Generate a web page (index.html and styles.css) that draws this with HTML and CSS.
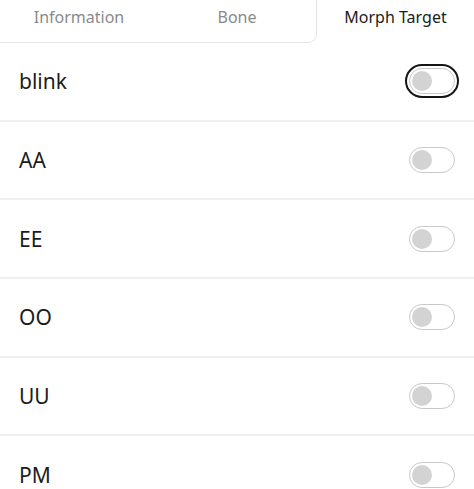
FILE: index.html
```html
<!DOCTYPE html>
<html lang="en">
<head>
    <meta charset="UTF-8">
    <title>Morph Target</title>
    <link rel="stylesheet" href="styles.css">
</head>
<body>
<div class="tabs">
    <div class="tabs-inactive">
        <div class="tab">Information</div>
        <div class="tab">Bone</div>
    </div>
    <div class="tab active">Morph Target</div>
</div>

<div class="list">
    <div class="row"><span class="label">blink</span><span class="toggle focused"><span class="knob"></span></span></div>
    <div class="row"><span class="label">AA</span><span class="toggle"><span class="knob"></span></span></div>
    <div class="row"><span class="label">EE</span><span class="toggle"><span class="knob"></span></span></div>
    <div class="row"><span class="label">OO</span><span class="toggle"><span class="knob"></span></span></div>
    <div class="row"><span class="label">UU</span><span class="toggle"><span class="knob"></span></span></div>
    <div class="row"><span class="label">PM</span><span class="toggle"><span class="knob"></span></span></div>
</div>
</body>
</html>
```

FILE: styles.css
```css
body { margin: 0; font-family: "Noto Sans", "Open Sans", sans-serif; background: #fff; color: #1c1c1c; overflow: hidden; }
.tabs { display: flex; height: 43px; }
.tabs-inactive { display: flex; width: 317px; border-right: 1px solid #e6e6e6; border-bottom: 1px solid #e6e6e6; border-bottom-right-radius: 9px; box-sizing: border-box; }
.tab { flex: 1; display: flex; align-items: center; justify-content: center; padding-bottom: 9px; font-size: 16px; color: #8a8a8a; }
.tabs .active { flex: 1; color: #1c1c1c; padding-bottom: 10px; }
.row { display: flex; align-items: center; justify-content: space-between; height: 76.7px; padding: 0 19px; border-bottom: 2px solid #efefef; }
.label { font-size: 21px; }
.toggle { display: flex; align-items: center; width: 46px; height: 26px; box-sizing: border-box; border: 1px solid #c9c9c9; border-radius: 13px; padding: 0 2px; }
.knob { width: 20px; height: 20px; border-radius: 50%; background: #d3d3d4; }
.toggle.focused { outline: 2px solid #151515; outline-offset: 2px; }
```
